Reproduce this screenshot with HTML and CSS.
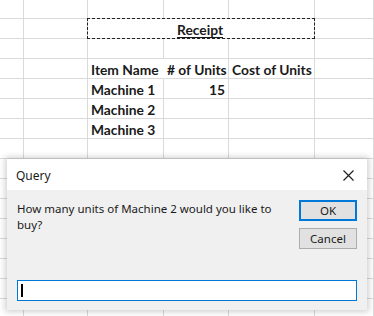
FILE: index.html
```html
<!DOCTYPE html>
<html>
<head>
<meta charset="utf-8">
<link rel="stylesheet" href="styles.css">
</head>
<body>
<div class="sheet">
  <div class="c"></div><div class="c"></div><div class="c"></div><div class="c"></div><div class="c"></div><div class="c"></div>
  <div class="c"></div><div class="c"></div><div class="c receipt"><span>Receipt</span></div><div class="c"></div>
  <div class="c"></div><div class="c"></div><div class="c"></div><div class="c"></div><div class="c"></div><div class="c"></div>
  <div class="c"></div><div class="c"></div><div class="c b over">Item Name</div><div class="c b">#&nbsp;of Units</div><div class="c b">Cost of Units</div><div class="c"></div>
  <div class="c"></div><div class="c"></div><div class="c b">Machine 1</div><div class="c b num">15</div><div class="c"></div><div class="c"></div>
  <div class="c"></div><div class="c"></div><div class="c b">Machine 2</div><div class="c"></div><div class="c"></div><div class="c"></div>
  <div class="c"></div><div class="c"></div><div class="c b">Machine 3</div><div class="c"></div><div class="c"></div><div class="c"></div>
  <div class="c"></div><div class="c"></div><div class="c"></div><div class="c"></div><div class="c"></div><div class="c"></div>
  <div class="c"></div><div class="c"></div><div class="c"></div><div class="c"></div><div class="c"></div><div class="c"></div>
  <div class="c"></div><div class="c"></div><div class="c"></div><div class="c"></div><div class="c"></div><div class="c"></div>
  <div class="c"></div><div class="c"></div><div class="c"></div><div class="c"></div><div class="c"></div><div class="c"></div>
  <div class="c"></div><div class="c"></div><div class="c"></div><div class="c"></div><div class="c"></div><div class="c"></div>
  <div class="c"></div><div class="c"></div><div class="c"></div><div class="c"></div><div class="c"></div><div class="c"></div>
  <div class="c"></div><div class="c"></div><div class="c"></div><div class="c"></div><div class="c"></div><div class="c"></div>
  <div class="c"></div><div class="c"></div><div class="c"></div><div class="c"></div><div class="c"></div><div class="c"></div>
  <div class="c"></div><div class="c"></div><div class="c"></div><div class="c"></div><div class="c"></div><div class="c"></div>
</div>

<div class="dialog">
  <div class="titlebar">
    <span class="title">Query</span>
    <svg class="close" width="11" height="11" viewBox="0 0 11 11"><path d="M0.5 0.5 L10.5 10.5 M10.5 0.5 L0.5 10.5" stroke="#1a1a1a" stroke-width="1.1" fill="none"/></svg>
  </div>
  <div class="body">
    <div class="top">
      <p class="msg">How many units of Machine 2 would you like to buy?</p>
      <div class="buttons">
        <button class="btn ok">OK</button>
        <button class="btn">Cancel</button>
      </div>
    </div>
    <div class="input"><span class="caret"></span></div>
  </div>
</div>
</body>
</html>
```
FILE: styles.css
```css
html, body { margin: 0; padding: 0; background: #fff; }
body { width: 374px; height: 316px; overflow: hidden; position: relative; }

.sheet {
  display: grid;
  grid-template-columns: 24px 64px 76px 65px 86px 1fr;
  grid-template-rows: 19px;
  grid-auto-rows: 20px;
  font-family: "Lato", "Liberation Sans", sans-serif;
  font-weight: 700;
  font-size: 13.8px;
  color: #1a1a1a;
}
.c {
  box-sizing: border-box;
  border-right: 1px solid #dadada;
  border-bottom: 1px solid #dadada;
  white-space: nowrap;
  line-height: 19px;
  padding: 1px 2px 0 3px;
  overflow: visible;
}
.b { font-weight: 700; }
.over { border-right-color: transparent; }
.num { text-align: right; padding-right: 3px; }
.receipt {
  grid-column: span 3;
  position: relative;
  text-align: center;
  padding-left: 0;
}
.receipt::after {
  content: "";
  position: absolute;
  left: -1px; top: -1px; right: -1px; bottom: -1px;
  border: 1px dashed #222;
}
.receipt span { text-decoration: underline; text-underline-offset: 2px; }

.dialog {
  position: absolute;
  left: 7px;
  top: 159px;
  width: 360px;
  height: 151px;
  background: #f0f0f0;
  box-shadow: 0 0 6px 2px rgba(0,0,0,0.18);
  font-family: "Noto Sans", "Open Sans", sans-serif;
  font-size: 11.5px;
  color: #1a1a1a;
  display: flex;
  flex-direction: column;
}
.titlebar {
  height: 31px;
  background: #fff;
  display: flex;
  align-items: center;
  justify-content: space-between;
  padding: 0 13px 0 9px;
}
.title { font-size: 12px; padding-top: 1px; }
.close { display: block; margin-top: 1px; }
.body {
  flex: 1;
  padding: 10px 10px 0 10px;
  display: flex;
  flex-direction: column;
}
.top { display: flex; justify-content: space-between; }
.msg {
  margin: 0;
  width: 272px;
  line-height: 16px;
  padding-top: 1px;
}
.buttons {
  display: flex;
  flex-direction: column;
  gap: 7px;
}
.btn {
  box-sizing: border-box;
  width: 58px;
  height: 21px;
  background: #e1e1e1;
  border: 1px solid #adadad;
  font-family: "Noto Sans", "Open Sans", sans-serif;
  font-size: 11.5px;
  color: #1a1a1a;
  padding: 0;
  line-height: 18px;
}
.btn.ok { border: 2px solid #0078d7; line-height: 16px; }
.input {
  margin-top: auto;
  margin-bottom: 9px;
  box-sizing: border-box;
  height: 21px;
  width: 340px;
  background: #fff;
  border: 1px solid #0078d7;
  display: flex;
  align-items: center;
  padding-left: 3px;
}
.caret { width: 2px; height: 13px; background: #000; }
```
